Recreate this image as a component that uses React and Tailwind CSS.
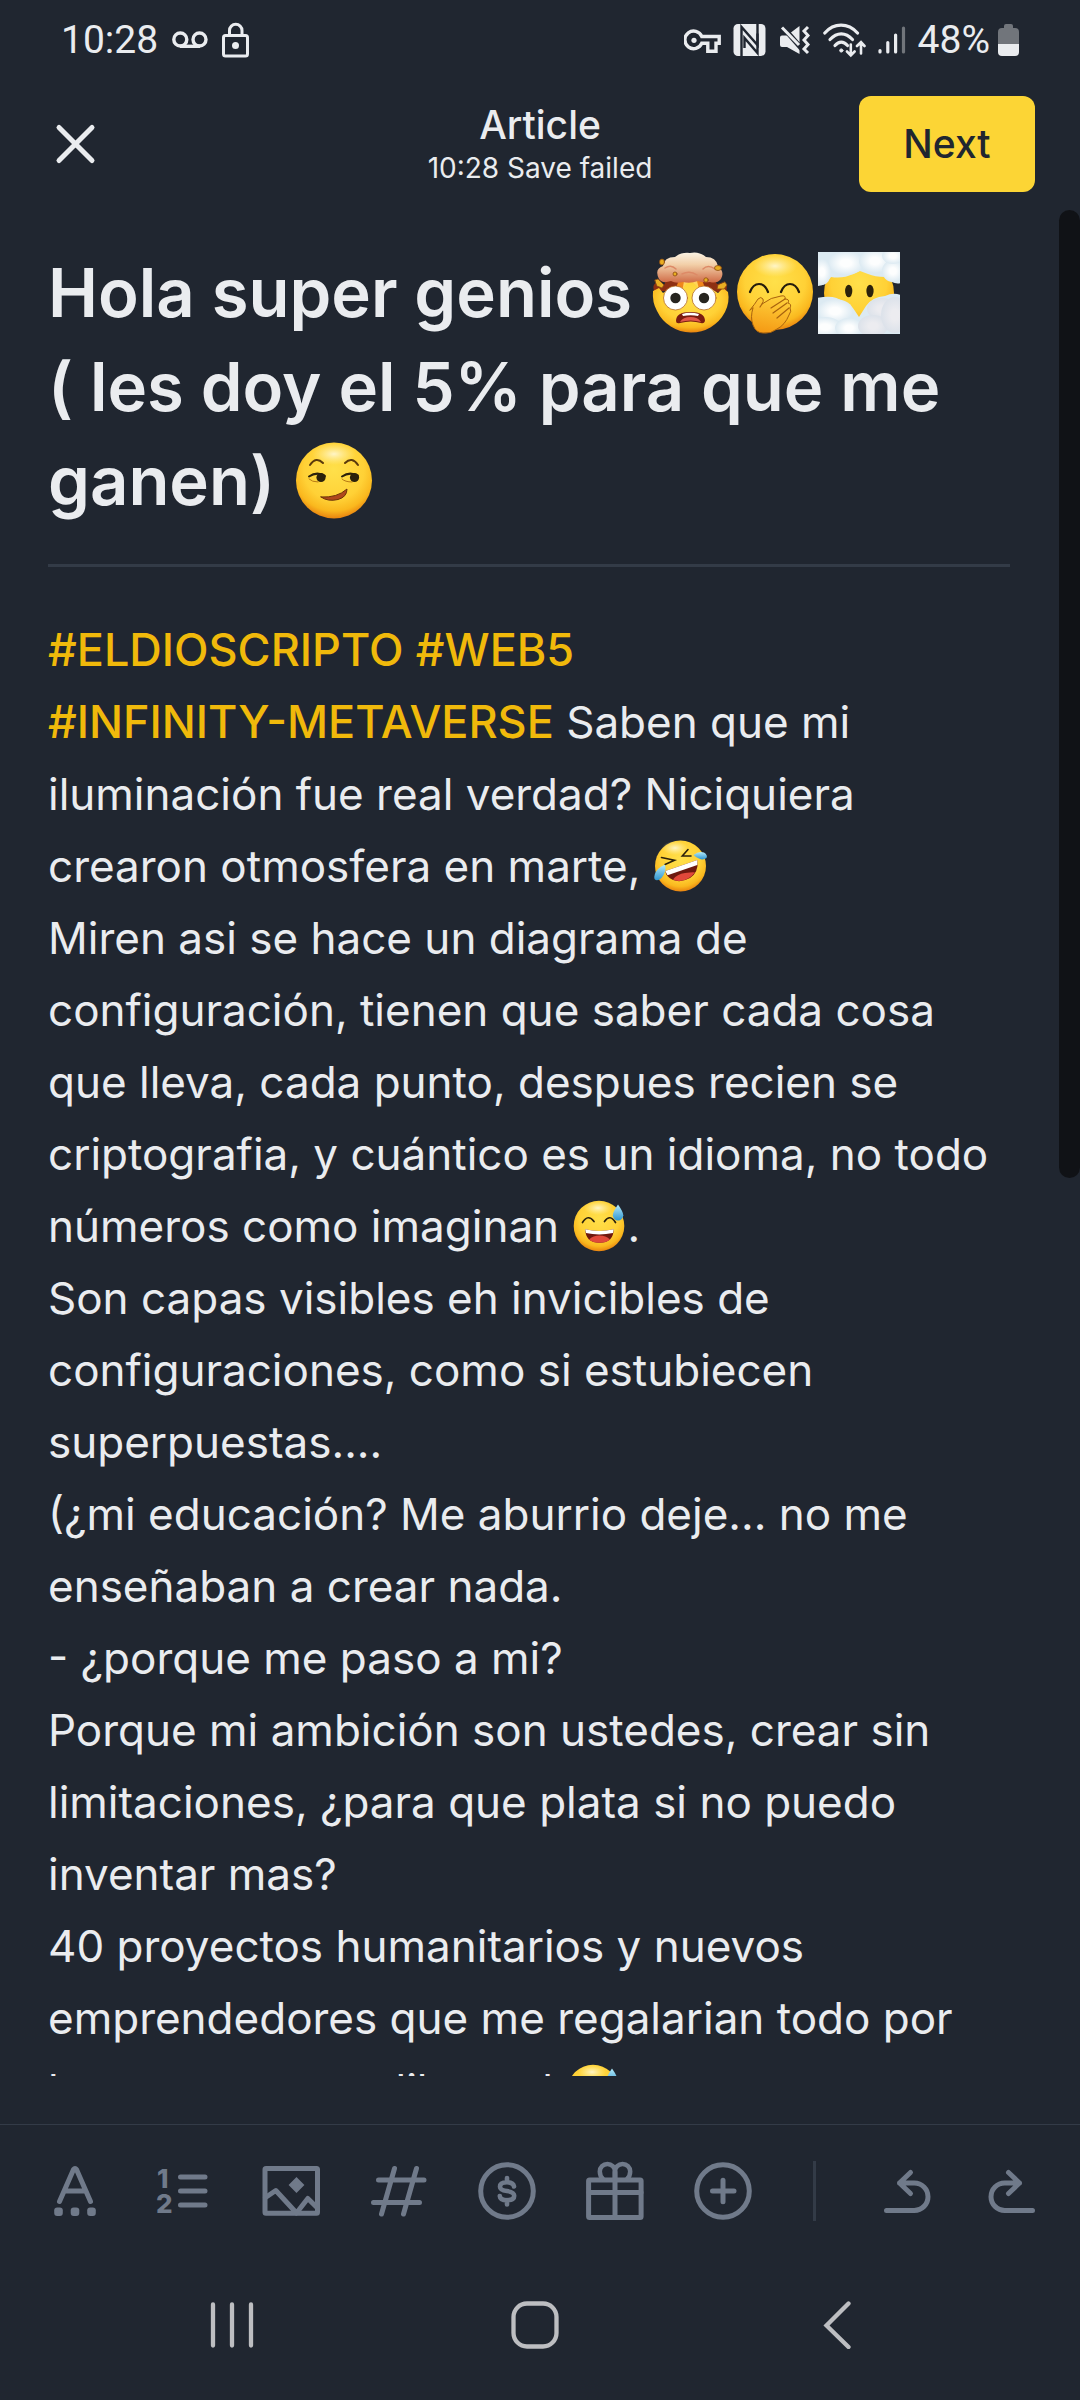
const paragraphs = [
  [
    "iluminación fue real verdad? Niciquiera",
    "crearon otmosfera en marte, {rofl}",
  ],
  [
    "Miren asi se hace un diagrama de",
    "configuración, tienen que saber cada cosa",
    "que lleva, cada punto, despues recien se",
    "criptografia, y cuántico es un idioma, no todo",
    "números como imaginan {sweat}.",
  ],
  [
    "Son capas visibles eh invicibles de",
    "configuraciones, como si estubiecen",
    "superpuestas....",
  ],
  [
    "(¿mi educación? Me aburrio deje... no me",
    "enseñaban a crear nada.",
  ],
  ["- ¿porque me paso a mi?"],
  [
    "Porque mi ambición son ustedes, crear sin",
    "limitaciones, ¿para que plata si no puedo",
    "inventar mas?",
  ],
  [
    "40 proyectos humanitarios y nuevos",
    "emprendedores que me regalarian todo por",
    "buscar nuestras libertad {sweat}",
  ],
];

export default function App() {
  return (
    <div className="h-screen flex flex-col overflow-hidden bg-[#202630] text-[#eaecef] font-['Inter',sans-serif]">
      <EmojiDefs />
      <StatusBar />
      <Header />
      <main className="relative flex-1 min-h-0 overflow-hidden mb-12">
        <article className="pl-12 pr-[70px] pt-[38px] whitespace-nowrap">
          <h1 className="text-[67px] leading-[94px] font-semibold">
            Hola super genios <Exploding /><Giggle /><Cloudy />
            <br />
            ( les doy el 5% para que me
            <br />
            ganen) <Smirk />
          </h1>
          <hr className="mt-9 mb-[47px] border-0 h-[3px] bg-[#333b47]" />
          <div className="text-[44px] leading-[72px]">
            <p>
              <Tag>#ELDIOSCRIPTO</Tag> <Tag>#WEB5</Tag>
              <br />
              <Tag>#INFINITY-METAVERSE</Tag> Saben que mi
            </p>
            {paragraphs.map((lines, i) => (
              <p key={i}>
                {lines.map((line, j) => (
                  <span key={j} className="block"><Line text={line} /></span>
                ))}
              </p>
            ))}
          </div>
        </article>
        <div className="absolute right-0 top-[2px] w-[21px] h-[968px] rounded-full bg-[#101216]" />
      </main>
      <Toolbar />
      <NavBar />
    </div>
  );
}

function Tag({ children }) {
  return <a href="#" className="text-[45px] font-medium text-[#f0b90b]">{children}</a>;
}

function Line({ text }) {
  return text.split(/(\{\w+\})/).map((part, i) => {
    if (part === "{rofl}") return <Rofl key={i} />;
    if (part === "{sweat}") return <Sweat key={i} />;
    return part;
  });
}

function StatusBar() {
  return (
    <div className="h-20 shrink-0 flex items-center justify-between px-[61px] text-[39px] leading-none font-['Roboto',sans-serif]">
      <div className="flex items-center">
        <span>10:28</span>
        <svg className="ml-3.5 w-9 h-9" viewBox="0 0 36 36" fill="none" stroke="currentColor" strokeWidth="3.4">
          <circle cx="8.3" cy="17.5" r="6.5" />
          <circle cx="27.5" cy="17.5" r="6.5" />
          <path d="M8 24.3h20" />
        </svg>
        <svg className="ml-3.5 w-7 h-9" viewBox="0 0 28 36" fill="none" stroke="currentColor" strokeWidth="3">
          <rect x="1.5" y="13.5" width="24" height="20.5" rx="2" />
          <path d="M7.5 13V8.5a6 6 0 0 1 12.5 0V13" />
          <circle cx="13.5" cy="23.5" r="3.5" fill="currentColor" stroke="none" />
        </svg>
      </div>
      <div className="flex items-center gap-3">
        <svg className="w-[37px] h-9" viewBox="0 0 37 36" fill="none" stroke="currentColor" strokeWidth="3.4">
          <path d="M17.8 14.5H35.2V21.2H32V29.2H23.8V21.2H17.8A8.8 8.8 0 1 1 17.8 14.5Z" />
          <circle cx="10" cy="18.3" r="2.6" fill="currentColor" stroke="none" />
        </svg>
        <svg className="w-[33px] h-9" viewBox="0 0 33 36">
          <rect x="0.5" y="2" width="32" height="32" rx="4.5" fill="currentColor" />
          <path d="M8.5 34V5L24.5 23V11.5" fill="none" stroke="#202630" strokeWidth="2.4" />
          <path d="M24.5 2V31L11.5 16V26" fill="none" stroke="#202630" strokeWidth="2.4" />
        </svg>
        <svg className="w-[33px] h-9" viewBox="0 0 33 36" fill="none" stroke="currentColor">
          <path d="M4 13.5H9L21.5 4V32L9 25H4q-2 0-2-2v-7.5q0-2 2-2z" fill="currentColor" stroke="none" />
          <path d="M3 3L24 27" stroke="#202630" strokeWidth="5" />
          <path d="M4 5.5L21 23" strokeWidth="3" />
          <path d="M30 5l-4 4 4 4.5-4 4.5 4 4.5-4 4.5 4 4" strokeWidth="3" />
        </svg>
        <svg className="w-[43px] h-9" viewBox="0 0 43 36" fill="none" stroke="currentColor" strokeWidth="3.2" strokeLinecap="round">
          <path d="M1.8 11C11 .6 25 .6 34.5 11" />
          <path d="M7 17.5C14 10 22.5 10 29.5 17.5" />
          <path d="M12 23.5C16 19 20.5 19 24.5 23.5" />
          <circle cx="18.3" cy="28.5" r="1.6" fill="currentColor" strokeWidth="1" />
          <path d="M27.8 22.5V33M24 29.5l3.8 3.8 3.8-3.8M38 31.5V21M34 24l4-3.8 3.5 3.8" strokeWidth="2.6" />
        </svg>
        <svg className="w-7 h-9" viewBox="0 0 28 36" stroke="currentColor" strokeWidth="3.2" strokeLinecap="round">
          <path d="M2 28.5V30M9.8 20.5V30M17.6 13V30" />
          <path d="M25.5 6V30" stroke="#71757b" />
        </svg>
        <div className="flex items-center gap-2">
          <span>48%</span>
          <svg className="w-[21px] h-9" viewBox="0 0 21 36">
            <path d="M6 6V4q0-2 2-2h5q2 0 2 2V6h2q4 0 4 4V22H0V10Q0 6 4 6Z" fill="#71757b" />
            <path d="M0 22H21V30q0 4-4 4H4Q0 34 0 30Z" fill="currentColor" />
          </svg>
        </div>
      </div>
    </div>
  );
}

function Header() {
  return (
    <header className="h-32 shrink-0 grid grid-cols-[1fr_auto_1fr] items-center px-[45px]">
      <button type="button" aria-label="Close" className="size-[60px]">
        <svg viewBox="0 0 60 60" fill="none" stroke="currentColor" strokeWidth="5" strokeLinecap="round">
          <path d="M14 13.5L47 46.5M47 13.5L14 46.5" />
        </svg>
      </button>
      <div className="text-center">
        <div className="text-[39px] leading-[48px] font-medium">Article</div>
        <div className="text-[28px] leading-[38px]">10:28 Save failed</div>
      </div>
      <button type="button" className="justify-self-end w-44 h-24 rounded-xl bg-[#fcd535] text-[#202630] text-[39px] font-medium">
        Next
      </button>
    </header>
  );
}

function Tool({ label, children }) {
  return (
    <button type="button" aria-label={label} className="size-[72px]">
      <svg viewBox="0 0 72 72" fill="none" stroke="currentColor" strokeWidth="5" strokeLinecap="round" strokeLinejoin="round">
        {children}
      </svg>
    </button>
  );
}

function Toolbar() {
  return (
    <div className="h-[133px] shrink-0 flex items-center justify-between border-t border-[#333b47] pl-[39px] pr-8 text-[#707a8a]">
      <div className="flex gap-9">
        <Tool label="Text style">
          <path d="M20.5 46.5L34.5 14.5q1.5-2 3 0L51.5 46.5M25.5 36H46.5" />
          <g fill="currentColor" stroke="none">
            <rect x="15.2" y="52.5" width="8.6" height="8.6" rx="3" />
            <rect x="31.7" y="52.5" width="8.6" height="8.6" rx="3" />
            <rect x="48.2" y="52.5" width="8.6" height="8.6" rx="3" />
          </g>
        </Tool>
        <Tool label="Numbered list">
          <path d="M33.5 22H58M33.5 36H58M33.5 50H58" />
          <g fill="currentColor" stroke="none" fontSize="26" fontWeight="800">
            <text x="10" y="33">1</text>
            <text x="9" y="58">2</text>
          </g>
        </Tool>
        <Tool label="Image">
          <rect x="10" y="13.5" width="52.5" height="44.7" rx="1" />
          <path d="M10.5 42.5L20.8 35.5 41.5 58L52.8 43.5 62 52.5" />
          <path d="M41.5 23.5L48 30 41.5 36.5 35 30Z" fill="currentColor" strokeWidth="2" strokeLinejoin="miter" />
        </Tool>
        <Tool label="Hashtag">
          <path d="M31.5 13.5L18.5 59M53.5 13.5L40.5 59M15.5 25H61M10.5 47.5H56.5" />
        </Tool>
        <Tool label="Coin">
          <circle cx="36" cy="36" r="26.3" />
          <path d="M36 23V27M36 45V49.5M43 31.5C42.5 28.5 40 27.3 36 27.3C31.5 27.3 29 29 29 31.7C29 34.5 32 35.5 36 36.1C40 36.7 43.2 37.7 43.2 40.8C43.2 43.7 40.5 45.2 36 45.2C31.5 45.2 29 43.7 28.8 41" strokeWidth="4.6" />
        </Tool>
        <Tool label="Red packet">
          <rect x="9.6" y="25" width="52.5" height="37.5" rx="1" />
          <path d="M10 37.5H62M36 17V62" />
          <path d="M36 24V16.5a7.5 7.5 0 0 0-15.2 0q0 5 3.5 8M36 16.5a7.5 7.5 0 0 1 15.2 0q0 5-3.5 8" strokeWidth="4.5" />
        </Tool>
        <Tool label="More">
          <circle cx="36" cy="36" r="26.3" />
          <path d="M25.5 36H47M36 25.2V46.8" />
        </Tool>
      </div>
      <div className="flex items-center">
        <div className="w-[3px] h-[60px] mr-[55px] bg-[#333b47]" />
        <div className="flex gap-[33px]">
          <Tool label="Undo">
            <path d="M39.5 17.5L28.5 28 39.5 38.5M28.5 28H43.3a13.7 13.7 0 0 1 0 27.4H15.5" />
          </Tool>
          <Tool label="Redo">
            <path d="M32.5 17.5L43.5 28 32.5 38.5M43.5 28H28.7a13.7 13.7 0 0 0 0 27.4H56.5" />
          </Tool>
        </div>
      </div>
    </div>
  );
}

function NavBar() {
  return (
    <nav className="h-[143px] shrink-0 flex items-center justify-between pl-52 pr-[219px] pb-2 text-[#bdbec1]">
      <button type="button" aria-label="Recents" className="size-12">
        <svg viewBox="0 0 48 48" stroke="currentColor" strokeWidth="4.3" strokeLinecap="round">
          <path d="M5 3.5V44.5M24 3.5V44.5M43 3.5V44.5" />
        </svg>
      </button>
      <button type="button" aria-label="Home" className="size-12">
        <svg viewBox="0 0 48 48" fill="none" stroke="currentColor" strokeWidth="4.3">
          <rect x="2.5" y="2.5" width="43" height="43" rx="13.5" />
        </svg>
      </button>
      <button type="button" aria-label="Back" className="size-12">
        <svg viewBox="0 0 48 48" fill="none" stroke="currentColor" strokeWidth="4.3" strokeLinecap="round">
          <path d="M35.5 2.5L13.5 24.5 35.5 46" />
        </svg>
      </button>
    </nav>
  );
}

/* emoji */

function EmojiDefs() {
  return (
    <svg className="absolute size-0" aria-hidden="true">
      <defs>
        <radialGradient id="face" cx="0.5" cy="0.36" r="0.66">
          <stop offset="0" stopColor="#ffe04a" />
          <stop offset="0.6" stopColor="#ffd136" />
          <stop offset="0.82" stopColor="#fab81e" />
          <stop offset="1" stopColor="#e5780c" />
        </radialGradient>
        <radialGradient id="shine">
          <stop offset="0" stopColor="#fff8d6" stopOpacity="0.9" />
          <stop offset="1" stopColor="#fff0a0" stopOpacity="0" />
        </radialGradient>
        <linearGradient id="hand" x1="0.6" y1="0" x2="0.4" y2="1">
          <stop offset="0" stopColor="#ffd23c" />
          <stop offset="1" stopColor="#f59a14" />
        </linearGradient>
        <linearGradient id="blast" x1="0" y1="0" x2="0" y2="1">
          <stop offset="0" stopColor="#fbf3e4" />
          <stop offset="0.4" stopColor="#f2cfa8" />
          <stop offset="1" stopColor="#cf6a45" />
        </linearGradient>
        <linearGradient id="drop" x1="0" y1="0" x2="0" y2="1">
          <stop offset="0" stopColor="#b5ecfb" />
          <stop offset="1" stopColor="#2f95cf" />
        </linearGradient>
        <radialGradient id="puff">
          <stop offset="0.3" stopColor="#fdfefe" />
          <stop offset="1" stopColor="#dceaf2" />
        </radialGradient>
        <radialGradient id="puffGray">
          <stop offset="0.3" stopColor="#ececf0" />
          <stop offset="1" stopColor="#dce2ea" />
        </radialGradient>
        <clipPath id="cloudBox"><rect x="1" y="1" width="82" height="82" /></clipPath>
      </defs>
    </svg>
  );
}

function BigEmoji({ label, children }) {
  return (
    <svg role="img" aria-label={label} viewBox="0 0 84 84" className="inline-block size-[84px] align-[-18px]" fill="none" strokeLinecap="round" strokeLinejoin="round">
      {children}
    </svg>
  );
}

function SmallEmoji({ label, children }) {
  return (
    <svg role="img" aria-label={label} viewBox="0 0 56 56" className="inline-block size-14 align-[-12px]" fill="none" strokeLinecap="round" strokeLinejoin="round">
      {children}
    </svg>
  );
}

function Exploding() {
  return (
    <BigEmoji label="🤯">
      <path d="M5 40q-2-6 2-8l8 2 3-6H65l3 5 8-1q3 3 1 9z" fill="#8e2f12" />
      <path d="M25 42L30 29H53L58 42Z" fill="#f0861b" />
      <path d="M33 42l2-12h13l3 12z" fill="#ffd45e" />
      <path d="M4 40l6-3 4 5 8-5 9 4 6-8 5-3 5 4 6 7 8-4 8 5 5-5 5 4q2 10-3 20A38 38 0 0 1 8 60Q3 51 4 40Z" fill="url(#face)" />
      <path d="M10 28Q5 18 14 15q1-9 12-9 6-5 15-4 9-2 16 4 10 0 12 9 7 6 3 13-4 5-11 3-8 1-12-1-8 3-15 1-7 2-12-1-9 3-12-2Z" fill="url(#blast)" />
      <path d="M16 17q6-4 11 1M54 18q5-5 12 0M33 23q8-4 15 1" stroke="#dd8a67" strokeWidth="1.5" />
      <g fill="#e9ae22" stroke="#8b4a12" strokeWidth="0.8">
        <ellipse cx="13" cy="11" rx="2.5" ry="3" />
        <ellipse cx="69" cy="17" rx="3.5" ry="2.5" />
        <circle cx="26" cy="23" r="2" />
        <circle cx="57" cy="29" r="2.2" />
        <path d="M6 29l3-1 6 6-2 3-5-2zM76 31l2 3-3 4-7 0 1-4z" />
      </g>
      <circle cx="26.5" cy="47" r="12" fill="#fff" stroke="#b46a1e" strokeWidth="0.8" />
      <circle cx="55" cy="47" r="12" fill="#fff" stroke="#b46a1e" strokeWidth="0.8" />
      <circle cx="26.5" cy="47" r="5.2" fill="#26241f" />
      <circle cx="55" cy="47" r="5.2" fill="#26241f" />
      <path d="M27 70q0-9 14.5-9T56 70q-1 3-4 2-10-3-21 0-4 1-4-2z" fill="#7a1c10" />
      <path d="M31 71q3-5 10.5-5T52 71q-10-3-21 0z" fill="#e0574a" />
      <path d="M33 63q8-2.5 17 0l-1 2q-7-1.5-15 0z" fill="#fff" />
    </BigEmoji>
  );
}

function Giggle() {
  return (
    <BigEmoji label="🤭">
      <circle cx="42" cy="41" r="38" fill="url(#face)" />
      <ellipse cx="42" cy="15" rx="22" ry="11" fill="url(#shine)" />
      <path d="M17 41Q20 33 26 33T35 41M48 41Q51 33 57 33T66 41" stroke="#241c0c" strokeWidth="2.2" />
      <path d="M17 59Q22 53 25 48q3-3 5 0 1 2-1 5 9-7 19-8 5-1 4 3 5 0 3 4 4 1 2 5 2 3-1 7-4 10-12 14-6 5-14 4-7 0-10-8-3-8 0-17z" fill="url(#hand)" stroke="#a8620e" strokeWidth="1" />
      <path d="M52 48L38 57M54 52L40 62M56 57L44 67M27 56l2-3" stroke="#a8620e" strokeWidth="1.2" />
    </BigEmoji>
  );
}

function Cloudy() {
  return (
    <BigEmoji label="😶‍🌫️">
      <g clipPath="url(#cloudBox)">
        <circle cx="42" cy="42" r="35" fill="url(#face)" />
        <path d="M0 0H84V32Q76 34 68 26 58 26 51 23L43 20 36 23Q26 28 14 26 9 35 0 35Z" fill="#dceaf2" />
        <path d="M0 47Q18 43 26 51 35 54 38 60L42 66 49 55Q55 46 68 45 76 41 84 44V84H0Z" fill="#dceaf2" />
        <ellipse cx="29" cy="12" rx="18" ry="12" fill="url(#puff)" />
        <ellipse cx="58" cy="10" rx="16" ry="12" fill="url(#puff)" />
        <ellipse cx="5" cy="21" rx="9" ry="13" fill="url(#puff)" />
        <ellipse cx="76" cy="20" rx="11" ry="11" fill="url(#puff)" />
        <ellipse cx="76" cy="5" rx="11" ry="8" fill="url(#puff)" />
        <ellipse cx="18" cy="60" rx="18" ry="12" fill="url(#puff)" />
        <ellipse cx="8" cy="76" rx="17" ry="10" fill="url(#puff)" />
        <ellipse cx="32" cy="77" rx="14" ry="10" fill="url(#puff)" />
        <ellipse cx="65" cy="58" rx="15" ry="11" fill="url(#puffGray)" />
        <ellipse cx="56" cy="75" rx="15" ry="11" fill="url(#puffGray)" />
        <ellipse cx="78" cy="64" rx="14" ry="18" fill="url(#puffGray)" />
      </g>
      <ellipse cx="31.7" cy="40" rx="3.6" ry="6.3" fill="#2b210b" />
      <ellipse cx="53" cy="40" rx="3.6" ry="6.3" fill="#2b210b" />
    </BigEmoji>
  );
}

function Smirk() {
  return (
    <BigEmoji label="😏">
      <circle cx="42" cy="41.5" r="38" fill="url(#face)" />
      <ellipse cx="42" cy="15" rx="22" ry="11" fill="url(#shine)" />
      <path d="M18 26Q24 17 31 24M53 24Q60 17 66 26" stroke="#5a3a0c" strokeWidth="2" />
      <path d="M17 37.5Q25 32 33 37M50 37.5Q58 32 66 37" stroke="#2b210b" strokeWidth="2" />
      <path d="M17 40Q20 43 26 43M50 40Q53 43 60 43" stroke="#b77a14" strokeWidth="1" />
      <circle cx="29" cy="38.5" r="4.6" fill="#2b210b" />
      <circle cx="62.5" cy="38.5" r="4.6" fill="#2b210b" />
      <path d="M29 58Q45 59 55 50Q55 58 46 60.5Q36 63 29 58Z" fill="#b0481c" stroke="#6b3208" strokeWidth="1" />
    </BigEmoji>
  );
}

function Rofl() {
  return (
    <SmallEmoji label="🤣">
      <circle cx="27.5" cy="28" r="25.5" fill="url(#face)" />
      <ellipse cx="22" cy="10" rx="13" ry="7" fill="url(#shine)" />
      <path d="M8.5 19.5L21.5 22.3 12 26.5M35 11.5L29.3 18H38" stroke="#2b210b" strokeWidth="1.6" strokeLinejoin="miter" />
      <path d="M12.3 33L44.3 22Q46 34 37 40 28 45 20 42 13 39 12.3 33Z" fill="#6d180f" />
      <path d="M20 41.5Q24 36 32 35T42 34.5Q36 42 28 42.8 23 43.5 20 41.5Z" fill="#e0483a" />
      <path d="M12.3 33L44.3 22 44.3 27 14.5 37.3Z" fill="#fff" />
      <path d="M12 26.5Q14 33 8.5 40 4 44 1.5 41 .5 36 5 31 8 28 12 26.5Z" fill="url(#drop)" />
      <path d="M40.5 17Q46 12.5 51 14.5 55 17 53.5 20 50 22.5 46 20.5 43 19.5 40.5 17Z" fill="url(#drop)" />
    </SmallEmoji>
  );
}

function Sweat() {
  return (
    <SmallEmoji label="😅">
      <circle cx="28" cy="28" r="25.3" fill="url(#face)" />
      <ellipse cx="27" cy="10" rx="14" ry="7" fill="url(#shine)" />
      <path d="M11.5 24.5Q17 15.5 23 23.5M33.5 23.5Q39 15.5 44.5 24.5" stroke="#2b210b" strokeWidth="1.7" />
      <path d="M14.2 31.3Q28 34.5 42.7 31.3 42.5 44.8 28.5 44.8 14.5 44.8 14.2 31.3Z" fill="#6d180f" />
      <path d="M18 41.5Q22 37.5 28.5 37.5T39 41.5Q35 44.8 28.5 44.8T18 41.5Z" fill="#e0483a" />
      <path d="M14.2 31.3Q28 34.5 42.7 31.3L42 35Q28 37.8 15 35Z" fill="#fff" />
      <path d="M47 6.5Q52.3 14 52.3 17.3A5.2 5.2 0 0 1 41.8 17.3Q41.8 14 47 6.5Z" fill="url(#drop)" />
    </SmallEmoji>
  );
}
